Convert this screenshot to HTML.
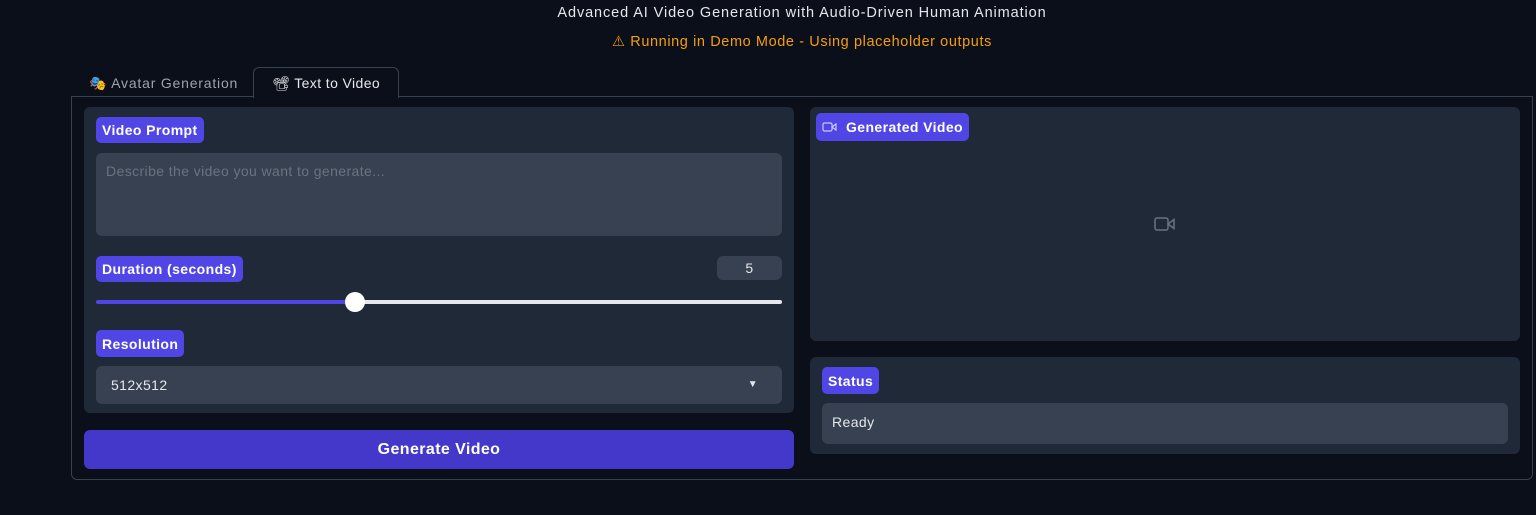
<!DOCTYPE html>
<html><head><meta charset="utf-8"><style>
*{box-sizing:border-box;margin:0;padding:0}
body{width:1536px;height:515px;background:#0b0f19;font-family:"Liberation Sans",sans-serif;color:#e5e7eb;position:relative;overflow:hidden;letter-spacing:0.4px}
.a{position:absolute}
.lbl{position:absolute;background:#4f46e5;color:#fff;font-weight:bold;font-size:14px;border-radius:5px;padding:0 6px;display:flex;align-items:center}
.panel{position:absolute;background:#1f2937;border-radius:6px}
.inp{position:absolute;background:#374151;border-radius:6px;font-size:14px}
</style></head><body>
<div class="a" style="left:0;width:1604px;top:5px;text-align:center;font-size:14.5px;color:#e5e7eb;letter-spacing:0.9px">Advanced AI Video Generation with Audio-Driven Human Animation</div>
<div class="a" style="left:0;width:1604px;top:34px;text-align:center;font-size:14.5px;color:#f59e0b;letter-spacing:0.6px">⚠ Running in Demo Mode - Using placeholder outputs</div>
<div class="a" style="left:89px;top:75px;font-size:14px;color:#9ca3af;letter-spacing:0.8px">🎭 Avatar Generation</div>
<div class="a" style="left:71px;top:96px;width:1462px;height:384px;border:1px solid #374151;border-radius:0 0 6px 6px"></div>
<div class="a" style="left:253px;top:67px;width:146px;height:31px;border:1px solid #374151;border-bottom:none;border-radius:6px 6px 0 0;background:#0b0f19;font-size:14px;color:#e5e7eb;padding:7px 0 0 18px">📽 Text to Video</div>
<div class="panel" style="left:84px;top:107px;width:710px;height:306px"></div>
<div class="lbl" style="left:96px;top:117px;height:26px">Video Prompt</div>
<div class="inp" style="left:96px;top:153px;width:686px;height:83px;color:#6b7280;padding:10px">Describe the video you want to generate...</div>
<div class="lbl" style="left:96px;top:256px;height:26px">Duration (seconds)</div>
<div class="inp" style="left:717px;top:256px;width:65px;height:24px;text-align:center;line-height:24px;color:#e5e7eb">5</div>
<div class="a" style="left:96px;top:300px;width:259px;height:4px;background:#4f46e5;border-radius:2px"></div>
<div class="a" style="left:355px;top:300px;width:427px;height:4px;background:#e5e7eb;border-radius:2px"></div>
<div class="a" style="left:345px;top:292px;width:20px;height:20px;background:#fff;border-radius:50%"></div>
<div class="lbl" style="left:96px;top:330px;height:27px">Resolution</div>
<div class="inp" style="left:96px;top:366px;width:686px;height:38px;line-height:38px;padding-left:15px;color:#e5e7eb">512x512<span style="position:absolute;right:24px;font-size:10px">▼</span></div>
<div class="a" style="left:84px;top:430px;width:710px;height:39px;background:#4338ca;border-radius:6px;color:#fff;font-weight:bold;font-size:16px;text-align:center;line-height:39px">Generate Video</div>
<div class="panel" style="left:810px;top:107px;width:710px;height:234px"></div>
<div class="lbl" style="left:816px;top:113px;height:28px"><svg width="16" height="12" viewBox="0 0 16 12" style="margin-right:8px"><rect x="1" y="2" width="9" height="8" rx="1.5" fill="none" stroke="#c7c9f5" stroke-width="1.2"/><path d="M10 6l4-3v6z" fill="none" stroke="#c7c9f5" stroke-width="1.2"/></svg>Generated Video</div>
<svg class="a" style="left:1154px;top:216px" width="22" height="16" viewBox="0 0 22 16"><rect x="1" y="2" width="13" height="12" rx="2" fill="none" stroke="#6b7280" stroke-width="1.5"/><path d="M14 8l6-4.5v9z" fill="none" stroke="#6b7280" stroke-width="1.5"/></svg>
<div class="panel" style="left:810px;top:357px;width:710px;height:97px"></div>
<div class="lbl" style="left:822px;top:367px;height:27px">Status</div>
<div class="inp" style="left:822px;top:403px;width:686px;height:41px;line-height:38px;padding-left:10px;color:#e5e7eb">Ready</div>
</body></html>
